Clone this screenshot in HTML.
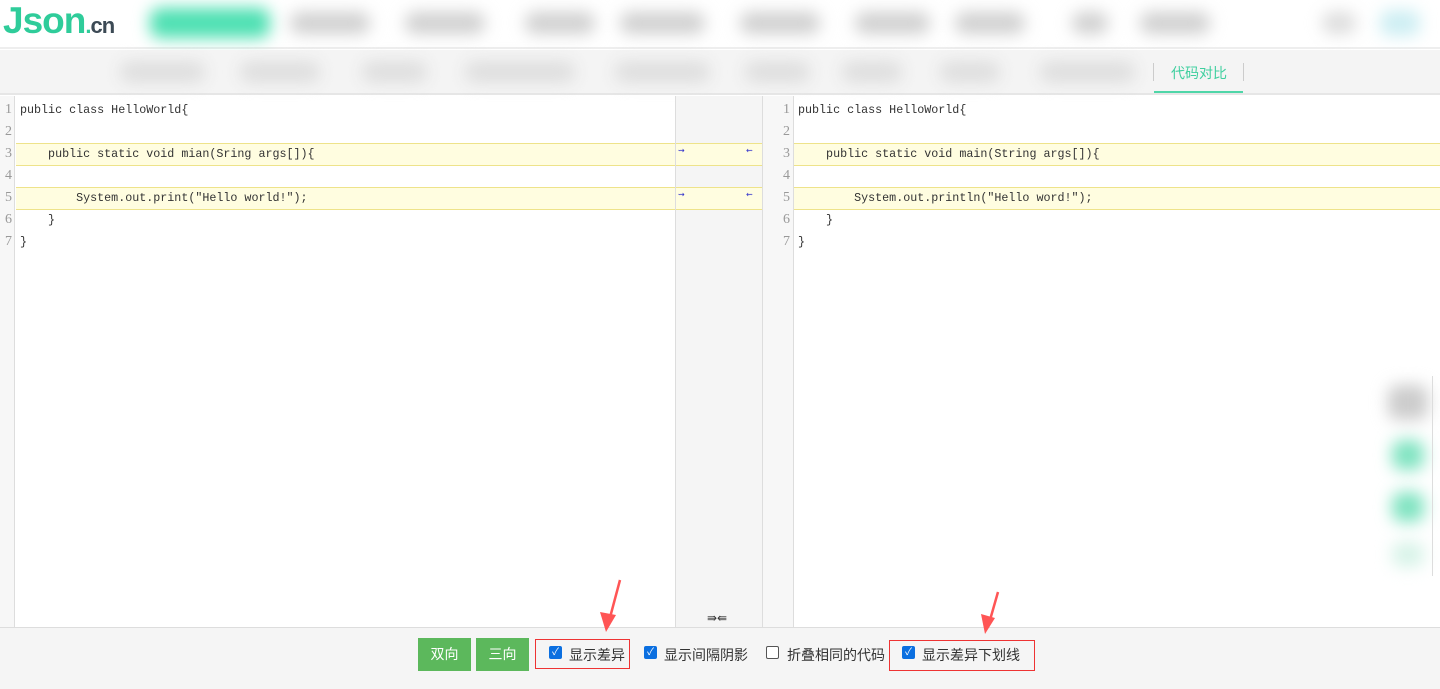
<!DOCTYPE html>
<html><head><meta charset="utf-8"><style>
*{margin:0;padding:0;box-sizing:border-box}
body{width:1440px;height:689px;overflow:hidden;background:#fff;font-family:"Liberation Sans","Noto Sans CJK SC",sans-serif;position:relative}
.b{position:absolute;filter:blur(8px);border-radius:10px}
.hdr{position:absolute;left:0;top:0;width:1440px;height:49px;background:#fff;border-bottom:2px solid #eee}
.sub{position:absolute;left:0;top:50px;width:1440px;height:45px;background:#f4f4f4;border-bottom:2px solid #e6e6e6}
.code{position:absolute;font-family:"Liberation Mono",monospace;font-size:11.7px;color:#333;white-space:pre}
.ln{position:absolute;font-family:"Liberation Serif",serif;font-size:14px;color:#999;text-align:right}
.hl{position:absolute;background:#fffde0;border-top:1px solid #eee38a;border-bottom:1px solid #eee38a;height:23px}
.ft{position:absolute;left:0;top:627px;width:1440px;height:62px;background:#f5f5f5;border-top:1px solid #ddd}
.btn{position:absolute;top:638px;height:33px;background:#5cb85c;color:#fff;font-size:14px;line-height:33px;text-align:center;width:53px}
.cb{position:absolute;top:646px;width:13px;height:13px;border-radius:2px;background:#0b6fe0;color:#fff;font-size:10px;line-height:13px;text-align:center}
.cbo{background:#fff;border:1px solid #555}
.lb{position:absolute;top:645px;font-size:14px;color:#333}
.rb{position:absolute;border:1.5px solid #e33}
</style></head><body>
<div class="hdr"></div>
<div style="position:absolute;left:3px;top:0px;font-size:37px;color:#2fcc9a;font-weight:bold;letter-spacing:-1px">Json<span style="font-size:22px;">.</span><span style="font-size:22px;color:#3c4a55">cn</span></div>
<div class="b" style="left:150px;top:8px;width:120px;height:30px;background:#4de0b2"></div>
<div class="b" style="left:290px;top:12px;width:80px;height:22px;background:#d0d0d0"></div>
<div class="b" style="left:405px;top:12px;width:80px;height:22px;background:#d0d0d0"></div>
<div class="b" style="left:525px;top:12px;width:70px;height:22px;background:#d0d0d0"></div>
<div class="b" style="left:620px;top:12px;width:85px;height:22px;background:#d0d0d0"></div>
<div class="b" style="left:740px;top:12px;width:80px;height:22px;background:#d0d0d0"></div>
<div class="b" style="left:855px;top:12px;width:75px;height:22px;background:#d0d0d0"></div>
<div class="b" style="left:955px;top:12px;width:70px;height:22px;background:#d0d0d0"></div>
<div class="b" style="left:1072px;top:12px;width:36px;height:22px;background:#d0d0d0"></div>
<div class="b" style="left:1140px;top:12px;width:70px;height:22px;background:#d0d0d0"></div>
<div class="b" style="left:1322px;top:12px;width:34px;height:22px;background:#ddd"></div>
<div class="b" style="left:1380px;top:10px;width:40px;height:26px;background:#cdeef3"></div>
<div class="sub"></div>
<div class="b" style="left:120px;top:62px;width:85px;height:20px;background:#ddd"></div>
<div class="b" style="left:240px;top:62px;width:80px;height:20px;background:#ddd"></div>
<div class="b" style="left:362px;top:62px;width:65px;height:20px;background:#ddd"></div>
<div class="b" style="left:465px;top:62px;width:110px;height:20px;background:#ddd"></div>
<div class="b" style="left:615px;top:62px;width:95px;height:20px;background:#ddd"></div>
<div class="b" style="left:745px;top:62px;width:65px;height:20px;background:#ddd"></div>
<div class="b" style="left:842px;top:62px;width:60px;height:20px;background:#ddd"></div>
<div class="b" style="left:940px;top:62px;width:60px;height:20px;background:#ddd"></div>
<div class="b" style="left:1040px;top:62px;width:95px;height:20px;background:#ddd"></div>
<div style="position:absolute;left:1153px;top:63px;width:1px;height:18px;background:#ccc"></div>
<div style="position:absolute;left:1243px;top:63px;width:1px;height:18px;background:#ccc"></div>
<div style="position:absolute;left:1171px;top:63px;font-size:14px;color:#3fcf9f">代码对比</div>
<div style="position:absolute;left:1154px;top:91px;width:89px;height:2px;background:#4fd6a8"></div>
<div style="position:absolute;left:0;top:96px;width:15px;height:531px;background:#f7f7f7;border-right:1px solid #ddd"></div>
<div style="position:absolute;left:675px;top:96px;width:88px;height:531px;background:#f5f5f5;border-left:1px solid #ddd;border-right:1px solid #ddd"></div>
<div style="position:absolute;left:763px;top:96px;width:31px;height:531px;background:#f7f7f7;border-right:1px solid #ddd"></div>
<div class="hl" style="left:16px;top:143px;width:659px"></div>
<div class="hl" style="left:16px;top:187px;width:659px"></div>
<div class="hl" style="left:676px;top:143px;width:86px"></div>
<div class="hl" style="left:676px;top:187px;width:86px"></div>
<div class="hl" style="left:794px;top:143px;width:646px"></div>
<div class="hl" style="left:794px;top:187px;width:646px"></div>
<div style="position:absolute;left:678px;top:146px;font-size:8px;color:#33c">⇝</div>
<div style="position:absolute;left:746px;top:146px;font-size:8px;color:#33c">⇜</div>
<div style="position:absolute;left:678px;top:190px;font-size:8px;color:#33c">⇝</div>
<div style="position:absolute;left:746px;top:190px;font-size:8px;color:#33c">⇜</div>
<div style="position:absolute;left:707px;top:611px;font-size:12px;color:#333">⇛⇚</div>
<div class="ln" style="left:0;top:99px;width:12px;line-height:22px">1<br>2<br>3<br>4<br>5<br>6<br>7</div>
<div class="ln" style="left:764px;top:99px;width:26px;line-height:22px">1<br>2<br>3<br>4<br>5<br>6<br>7</div>
<div class="code" style="left:20px;top:99px;line-height:22px">public class HelloWorld{

    public static void mian(Sring args[]){

        System.out.print("Hello world!");
    }
}</div>
<div class="code" style="left:798px;top:99px;line-height:22px">public class HelloWorld{

    public static void main(String args[]){

        System.out.println("Hello word!");
    }
}</div>
<div class="b" style="left:1388px;top:385px;width:40px;height:35px;background:#ccc"></div>
<div class="b" style="left:1392px;top:440px;width:32px;height:30px;background:#7ee3c0"></div>
<div class="b" style="left:1392px;top:492px;width:32px;height:30px;background:#7ee3c0"></div>
<div class="b" style="left:1392px;top:542px;width:32px;height:25px;background:#d7f3e8"></div>
<div style="position:absolute;left:1432px;top:376px;width:1px;height:200px;background:#ddd"></div>
<div class="ft"></div>
<div class="btn" style="left:418px">双向</div>
<div class="btn" style="left:476px">三向</div>
<div class="cb" style="left:549px">✓</div><div class="lb" style="left:569px">显示差异</div>
<div class="cb" style="left:644px">✓</div><div class="lb" style="left:664px">显示间隔阴影</div>
<div class="cb cbo" style="left:766px"></div><div class="lb" style="left:787px">折叠相同的代码</div>
<div class="cb" style="left:902px">✓</div><div class="lb" style="left:922px">显示差异下划线</div>
<div class="rb" style="left:535px;top:639px;width:95px;height:30px"></div>
<div class="rb" style="left:889px;top:640px;width:146px;height:31px"></div>
<svg style="position:absolute;left:0;top:0" width="1440" height="689">
<path d="M620 580 L608 625" stroke="#f55" stroke-width="2.5"/><path d="M600 612 L606 632 L616 615 Z" fill="#f55"/>
<path d="M998 592 L988 627" stroke="#f55" stroke-width="2.5"/><path d="M981 614 L985 634 L995 618 Z" fill="#f55"/>
</svg>
</body></html>
